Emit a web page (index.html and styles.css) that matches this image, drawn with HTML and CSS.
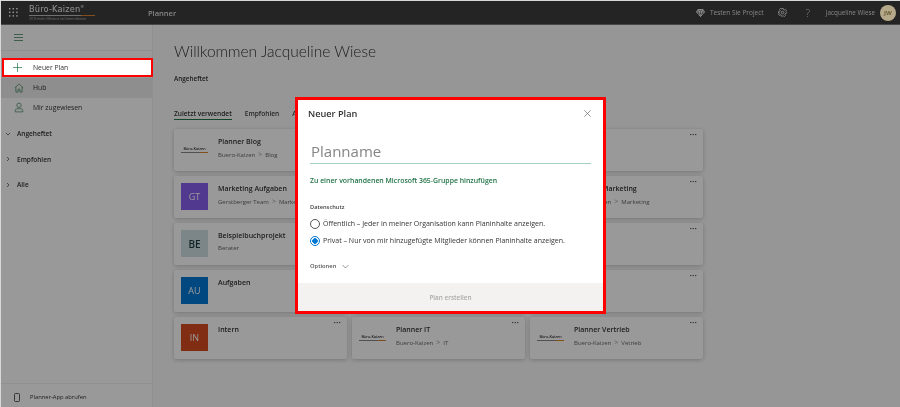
FILE: index.html
```html
<!DOCTYPE html>
<html lang="de">
<head>
<meta charset="utf-8">
<title>Planner</title>
<link rel="stylesheet" href="styles.css">
</head>
<body>
<div class="app">
  <header class="topbar">
    <svg class="waffle" width="9" height="9" viewBox="0 0 9 9" fill="#fff"><rect x="0" y="0" width="1.4" height="1.4"/><rect x="3.6" y="0" width="1.4" height="1.4"/><rect x="7.2" y="0" width="1.4" height="1.4"/><rect x="0" y="3.6" width="1.4" height="1.4"/><rect x="3.6" y="3.6" width="1.4" height="1.4"/><rect x="7.2" y="3.6" width="1.4" height="1.4"/><rect x="0" y="7.2" width="1.4" height="1.4"/><rect x="3.6" y="7.2" width="1.4" height="1.4"/><rect x="7.2" y="7.2" width="1.4" height="1.4"/></svg>
    <div class="brand">
      <div class="brand-name">Büro-Kaizen<sup>®</sup></div>
      <div class="brand-rule"><span></span></div>
      <div class="brand-tag">20 % mehr Effizienz im Unternehmen</div>
    </div>
    <div class="app-name">Planner</div>
    <div class="top-right">
      <svg class="diamond" width="9" height="8" viewBox="0 0 18 16" fill="none" stroke="#fff" stroke-width="1.6"><path d="M4 1h10l3 5-8 9-8-9zM1 6h16M6.500 6L9 15l2.500-9M4 1l2.500 5L9 1l2.500 5L14 1"/></svg>
      <span class="try">Testen Sie Project</span>
      <svg class="gear" width="9" height="9" viewBox="0 0 18 18" fill="none" stroke="#fff" stroke-width="1.6"><circle cx="9" cy="9" r="2.600"/><path d="M7.500 1h3l.6 2.400 1.800.8 2.100-1.300 2 2.100-1.200 2.100.7 1.800L17 9.500v1.500l-2.400.6-.8 1.800 1.300 2.100-2.100 2-2.100-1.200-1.800.7L8.500 17H7l-.6-2.400-1.800-.8-2.100 1.300-1.500-2 1.200-2.100-.7-1.800L1 10.500V7.500l2.400-.6.800-1.800L3 3l2-2 2.100 1.200z" transform="translate(.2 -.2) scale(.98)"/></svg>
      <span class="help">?</span>
      <span class="user">Jacqueline Wiese</span>
      <span class="avatar">JW</span>
    </div>
  </header>

  <div class="body">
    <nav class="sidebar">
      <div class="hamburger-row">
        <svg width="9" height="7" viewBox="0 0 9 7" stroke="#217346" stroke-width=".7"><path d="M0 .5h9M0 3.500h9M0 6.500h9"/></svg>
      </div>
      <div class="nav-top">
        <div class="nav-item nav-new-slot"></div>
        <div class="nav-item active">
          <svg class="nav-icon" width="10" height="10" viewBox="0 0 16 16" fill="none" stroke="#217346" stroke-width="1"><path d="M1.500 7.500L8 1.500l6.500 6M3 6.500V14.500h3.500V10h3v4.500H13V6.500"/></svg>
          <span>Hub</span>
        </div>
        <div class="nav-item">
          <svg class="nav-icon" width="10" height="11" viewBox="0 0 16 16" fill="none" stroke="#217346" stroke-width="1"><circle cx="8" cy="4.500" r="3.500"/><path d="M2 15v-2c0-2 1.500-3 3-3h6c1.500 0 3 1 3 3v2z"/></svg>
          <span>Mir zugewiesen</span>
        </div>
      </div>
      <div class="nav-groups">
        <div class="group"><svg class="chev" width="6" height="6" viewBox="0 0 6 6" fill="none" stroke="#444" stroke-width=".7"><path d="M1 2l2 2 2-2"/></svg><span>Angeheftet</span></div>
        <div class="group"><svg class="chev" width="6" height="6" viewBox="0 0 6 6" fill="none" stroke="#444" stroke-width=".7"><path d="M2 1l2 2-2 2"/></svg><span>Empfohlen</span></div>
        <div class="group"><svg class="chev" width="6" height="6" viewBox="0 0 6 6" fill="none" stroke="#444" stroke-width=".7"><path d="M2 1l2 2-2 2"/></svg><span>Alle</span></div>
      </div>
      <div class="get-app">
        <svg width="6" height="9" viewBox="0 0 6 9" fill="none" stroke="#333" stroke-width=".8"><rect x=".5" y=".5" width="5" height="8" rx="1"/></svg>
        <span>Planner-App abrufen</span>
      </div>
    </nav>

    <main class="main">
      <h1 class="welcome">Willkommen Jacqueline Wiese</h1>
      <div class="pinned">Angeheftet</div>
      <div class="tabs">
        <span class="tab current">Zuletzt verwendet</span>
        <span class="tab">Empfohlen</span>
        <span class="tab">Alle</span>
      </div>
      <div class="cards">
        <article class="card">
          <div class="thumb logo"><b>Büro-Kaizen</b><i></i></div>
          <div class="info"><div class="title">Planner Blog</div><div class="sub">Buero-Kaizen<em>&gt;</em>Blog</div></div>
          <span class="dots">···</span>
        </article>
        <article class="card"><span class="dots">···</span></article>
        <article class="card"><span class="dots">···</span></article>

        <article class="card">
          <div class="thumb purple">GT</div>
          <div class="info"><div class="title">Marketing Aufgaben</div><div class="sub">Gerstberger Team<em>&gt;</em>Marketing</div></div>
          <span class="dots">···</span>
        </article>
        <article class="card"><span class="dots">···</span></article>
        <article class="card">
          <div class="thumb logo"><b>Büro-Kaizen</b><i></i></div>
          <div class="info"><div class="title">Planner Marketing</div><div class="sub">Buero-Kaizen<em>&gt;</em>Marketing</div></div>
          <span class="dots">···</span>
        </article>

        <article class="card">
          <div class="thumb pale">BE</div>
          <div class="info"><div class="title">Beispielbuchprojekt</div><div class="sub">Berater</div></div>
          <span class="dots">···</span>
        </article>
        <article class="card"><span class="dots">···</span></article>
        <article class="card"><span class="dots">···</span></article>

        <article class="card">
          <div class="thumb blue">AU</div>
          <div class="info"><div class="title">Aufgaben</div></div>
          <span class="dots">···</span>
        </article>
        <article class="card"><span class="dots">···</span></article>
        <article class="card"><span class="dots">···</span></article>

        <article class="card">
          <div class="thumb rust">IN</div>
          <div class="info"><div class="title">Intern</div></div>
          <span class="dots">···</span>
        </article>
        <article class="card">
          <div class="thumb logo"><b>Büro-Kaizen</b><i></i></div>
          <div class="info"><div class="title">Planner IT</div><div class="sub">Buero-Kaizen<em>&gt;</em>IT</div></div>
          <span class="dots">···</span>
        </article>
        <article class="card">
          <div class="thumb logo"><b>Büro-Kaizen</b><i></i></div>
          <div class="info"><div class="title">Planner Vertrieb</div><div class="sub">Buero-Kaizen<em>&gt;</em>Vetrieb</div></div>
          <span class="dots">···</span>
        </article>
      </div>
    </main>
  </div>

  <div class="overlay"></div>

  <div class="new-plan-highlight">
    <svg width="9" height="9" viewBox="0 0 9 9" stroke="#217346" stroke-width=".7"><path d="M4.500 0v9M0 4.500h9"/></svg>
    <span>Neuer Plan</span>
  </div>

  <section class="dialog">
    <div class="dialog-body">
      <div class="dialog-head">
        <h2>Neuer Plan</h2>
        <svg width="7" height="7" viewBox="0 0 7 7" stroke="#555" stroke-width=".6"><path d="M.3.300l6.400 6.400M6.700.300L.3 6.700"/></svg>
      </div>
      <div class="plan-name">Planname</div>
      <div class="group-link">Zu einer vorhandenen Microsoft 365-Gruppe hinzufügen</div>
      <div class="privacy-label">Datenschutz</div>
      <div class="radio-row"><span class="radio"></span><span>Öffentlich – Jeder in meiner Organisation kann Planinhalte anzeigen.</span></div>
      <div class="radio-row second"><span class="radio on"></span><span>Privat – Nur von mir hinzugefügte Mitglieder können Planinhalte anzeigen.</span></div>
      <div class="options">
        <span>Optionen</span>
        <svg width="7" height="5" viewBox="0 0 7 5" fill="none" stroke="#555" stroke-width=".6"><path d="M.5 1l3 3 3-3"/></svg>
      </div>
    </div>
    <div class="dialog-foot">Plan erstellen</div>
  </section>
</div>
</body>
</html>
```

FILE: styles.css
```css
* { box-sizing: border-box; }
html, body { margin: 0; height: 100%; background: #d8d8d8; overflow: hidden; }
body { font-family: "Open Sans", "Noto Sans", sans-serif; color: #222; }

.app {
  position: absolute;
  inset: 1px 0 0 1px;
  display: flex;
  flex-direction: column;
  background: #fff;
  overflow: hidden;
  filter: blur(.35px);
}

/* top bar */
.topbar {
  height: 24px;
  flex: none;
  background: #3d3d3d;
  border-bottom: 1px solid #777;
  color: #fff;
  display: flex;
  align-items: center;
}
.waffle { margin-left: 8px; flex: none; }
.brand { margin-left: 11px; width: 66px; flex: none; }
.brand-name { font-family: "DejaVu Sans", sans-serif; font-size: 8.200px; line-height: 9px; letter-spacing: .2px; white-space: nowrap; color: #f2f2f2; }
.brand-name sup { font-size: 4px; line-height: 0; }
.brand-rule { height: 1px; background: #bbb; margin-top: 1px; position: relative; }
.brand-rule span { position: absolute; right: 0; top: 0; width: 14px; height: 1px; background: #d9822b; }
.brand-tag { font-size: 3.300px; line-height: 5px; color: #bbb; white-space: nowrap; }
.app-name { margin-left: 53px; font-size: 7.500px; font-weight: 600; color: #ddd; }
.top-right { margin-left: auto; display: flex; align-items: center; padding-right: 4px; font-size: 6.500px; color: #ddd; }
.diamond { margin-right: 5px; }
.gear { margin-left: 14px; }
.help { margin-left: 19px; font-size: 10px; line-height: 10px; font-weight: 300; }
.user { margin-left: 16px; font-size: 6.300px; }
.avatar {
  margin-left: 5px;
  width: 16px; height: 16px;
  border-radius: 50%;
  background: #b5a98a;
  color: #6a5d35;
  font-size: 6px;
  font-weight: 700;
  display: flex; align-items: center; justify-content: center;
  position: relative;
  z-index: 3;
}

.body { flex: 1; display: flex; min-height: 0; }

/* sidebar */
.sidebar {
  width: 152px;
  flex: none;
  border-right: 1px solid #f0f0f0;
  background: #fff;
  display: flex;
  flex-direction: column;
  font-size: 6.800px;
  color: #333;
}
.hamburger-row { height: 26px; display: flex; align-items: center; padding: 0 0 1px 13px; border-bottom: 1px solid #f0f0f0; }
.nav-top { padding-top: 8px; }
.nav-item { height: 19.500px; display: flex; align-items: center; padding-left: 13px; gap: 9px; }
.nav-item.active { background: #ededed; }
.nav-icon { flex: none; }
.nav-new-slot { height: 19px; }
.nav-groups { padding-top: 4px; }
.group { height: 25.500px; display: flex; align-items: center; padding-left: 4px; gap: 6px; font-weight: 600; font-size: 6.500px; }
.chev { flex: none; }
.get-app {
  margin-top: auto;
  height: 24px;
  border-top: 1px solid #f0f0f0;
  display: flex; align-items: center;
  padding: 3px 0 0 13px;
  gap: 10px;
  font-size: 5.800px;
}

/* main */
.main { flex: 1; background: #fafafa; padding: 0 0 0 21px; min-width: 0; }
.welcome { margin: 16px 0 0; font-family: "Lato", sans-serif; font-size: 15.500px; line-height: 20px; font-weight: 300; color: #333; white-space: nowrap; }
.pinned { margin-top: 13px; font-size: 6.400px; line-height: 10px; font-weight: 600; color: #333; }
.tabs { margin-top: 25px; display: flex; gap: 13px; font-size: 6.600px; line-height: 9px; font-weight: 600; color: #444; }
.tab { padding-bottom: 1px; border-bottom: 1px solid transparent; }
.tab.current { border-bottom-color: #217346; color: #333; }
.cards {
  margin-top: 9px;
  display: grid;
  grid-template-columns: repeat(3, 173px);
  grid-auto-rows: 42px;
  gap: 5px;
}
.card {
  position: relative;
  background: #fff;
  border-radius: 2px;
  box-shadow: 0 1px 4px rgba(0,0,0,.22);
  display: flex;
  padding: 7px;
}
.thumb {
  width: 27px; height: 27px;
  flex: none;
  display: flex; align-items: center; justify-content: center;
  color: #fff;
  font-size: 9px;
}
.purple { background: #8860f0; }
.pale { background: #cfe0e4; color: #1d3a3f; font-weight: 600; font-size: 10px; }
.blue { background: #0078d4; }
.rust { background: #d74b22; }
.logo { flex-direction: column; }
.logo b { font-size: 3.800px; line-height: 4px; color: #333; font-weight: 600; white-space: nowrap; }
.logo i { display: block; width: 27px; height: 1px; margin-top: 1px; background: linear-gradient(90deg, #888 70%, #d9822b 70%); }
.info { margin-left: 10px; min-width: 0; }
.title { font-size: 7px; line-height: 11px; font-weight: 600; color: #333; white-space: nowrap; }
.sub { margin-top: 3px; font-size: 6px; line-height: 9px; color: #666; white-space: nowrap; }
.sub em { font-style: normal; margin: 0 3px; font-size: 7px; font-weight: 300; }
.dots { position: absolute; right: 6px; top: 1px; font-size: 9px; line-height: 10px; font-weight: 600; color: #444; }

/* overlay & over-the-page pieces */
.overlay { position: absolute; inset: 0; background: rgba(0,0,0,.4); z-index: 1; }

.new-plan-highlight {
  position: absolute;
  left: 1px; top: 57px;
  width: 151px; height: 19px;
  z-index: 2;
  background: #fff;
  border: 2px solid #f00;
  display: flex; align-items: center;
  padding-left: 9px;
  gap: 11px;
  font-size: 6.800px;
  color: #333;
}

.dialog {
  position: absolute;
  left: 294px; top: 96px;
  width: 311px; height: 217px;
  z-index: 2;
  background: #fff;
  border: 3px solid #f00;
  display: flex;
  flex-direction: column;
}
.dialog-body { flex: 1; padding: 0 12px 0 12px; }
.dialog-head { height: 27px; display: flex; align-items: center; justify-content: space-between; margin-left: -2px; }
.dialog-head h2 { margin: 0; font-size: 9.200px; font-weight: 600; color: #333; }
.plan-name {
  margin-top: 13px;
  height: 24px;
  padding-left: 1px;
  border-bottom: 1px solid #a6cfbd;
  font-size: 15px;
  line-height: 23px;
  color: #858585;
}
.group-link { margin-top: 12px; font-size: 6.900px; line-height: 10px; font-weight: 600; color: #217346; white-space: nowrap; }
.privacy-label { margin-top: 17px; font-size: 5.700px; line-height: 8px; font-weight: 600; color: #444; }
.radio-row { margin-top: 7px; height: 11px; display: flex; align-items: center; gap: 3px; font-size: 7px; color: #333; white-space: nowrap; }
.radio-row.second { margin-top: 6px; }
.radio { width: 10px; height: 10px; flex: none; border: 1px solid #555; border-radius: 50%; background: #fff; }
.radio.on { border-color: #0078d4; background: radial-gradient(circle, #0078d4 0 2.500px, #fff 3px); }
.options { margin-top: 16px; display: flex; align-items: center; gap: 6px; font-size: 5.800px; line-height: 8px; font-weight: 600; color: #555; }
.dialog-foot {
  flex: none;
  height: 28px;
  background: #f4f2f0;
  display: flex; align-items: center; justify-content: center;
  font-size: 6.400px;
  font-weight: 600;
  color: #aaa;
}
```
